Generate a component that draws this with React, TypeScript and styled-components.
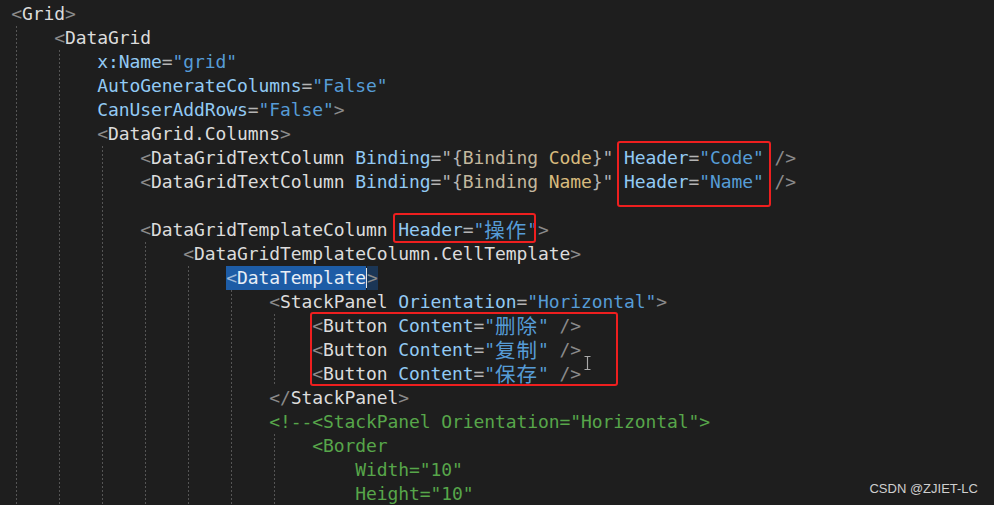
import React from 'react'
import styled, { createGlobalStyle, css } from 'styled-components'

const COL = 10.75
const LINE = 24
const LEFT = 11.3
const TOP = 2

type Kind = 'p' | 't' | 'a' | 'e' | 'v' | 'x' | 'y' | 'c' | 'w' | 'sp' | 'st' | 'sq' | 'caret'
type Tok = [Kind, string]

const colors: Record<Kind, string> = {
  p: '#8a8a8a',
  t: '#dcdcdc',
  a: '#92caf4',
  e: '#b4b4b4',
  v: '#569cd6',
  x: '#c4b89e',
  y: '#d7ba7d',
  c: '#57a64a',
  w: '#569cd6',
  sp: '#9cb8d8',
  st: '#e8eef6',
  sq: '#8a8a8a',
  caret: '#e0e0e0',
}

const Global = createGlobalStyle`
  html, body {
    margin: 0;
    padding: 0;
    background: #1e1e1e;
  }
`

const Editor = styled.div`
  position: relative;
  width: 994px;
  height: 505px;
  overflow: hidden;
  background: #1e1e1e;
`

const Code = styled.div`
  display: flex;
  flex-direction: column;
  padding: ${TOP}px 0 0 ${LEFT}px;
  font-family: "DejaVu Sans Mono", "Liberation Mono", monospace;
  font-size: 18px;
  letter-spacing: -0.09px;
`

const Line = styled.div<{ $indent: number }>`
  height: ${LINE}px;
  line-height: ${LINE}px;
  white-space: pre;
  padding-left: ${p => p.$indent * COL}px;
`

const Span = styled.span<{ $k: Kind }>`
  color: ${p => colors[p.$k]};
  ${p =>
    p.$k === 'w' &&
    css`
      display: inline-block;
      vertical-align: top;
      height: ${LINE}px;
      line-height: 22px;
      font-family: "Noto Sans CJK SC", sans-serif;
      font-size: 20.5px;
      letter-spacing: 1px;
    `}
  ${p =>
    (p.$k === 'sp' || p.$k === 'st') &&
    css`
      display: inline-block;
      height: ${LINE}px;
      background: #1d5ca6;
    `}
  ${p =>
    p.$k === 'sq' &&
    css`
      display: inline-block;
      height: ${LINE}px;
      background: #1b3656;
    `}
`

const Caret = styled.span`
  display: inline-block;
  width: 0;
  height: 20px;
  margin-top: 2px;
  vertical-align: top;
  border-left: 1.5px solid #e6e6e6;
`

const Guide = styled.div<{ $col: number; $from: number; $to: number }>`
  position: absolute;
  left: ${p => LEFT + p.$col * COL + 5}px;
  top: ${p => TOP + p.$from * LINE}px;
  height: ${p => (p.$to - p.$from) * LINE}px;
  width: 1px;
  background: repeating-linear-gradient(to bottom, #555 0 2px, transparent 2px 4px);
`

const RedBox = styled.div<{ $x: number; $y: number; $w: number; $h: number }>`
  position: absolute;
  left: ${p => p.$x}px;
  top: ${p => p.$y}px;
  width: ${p => p.$w}px;
  height: ${p => p.$h}px;
  box-sizing: border-box;
  border: 2px solid #ee1f1f;
  border-radius: 3px;
`

const Pointer = styled.svg`
  position: absolute;
  left: 583px;
  top: 355px;
`

const Watermark = styled.div`
  position: absolute;
  right: 16px;
  top: 481px;
  font-family: "Liberation Sans", Arial, sans-serif;
  font-size: 13px;
  color: #cfcfcf;
`

const lines: { indent: number; toks: Tok[] }[] = [
  { indent: 0, toks: [['p', '<'], ['t', 'Grid'], ['p', '>']] },
  { indent: 4, toks: [['p', '<'], ['t', 'DataGrid']] },
  { indent: 8, toks: [['a', 'x:Name'], ['e', '='], ['v', '"grid"']] },
  { indent: 8, toks: [['a', 'AutoGenerateColumns'], ['e', '='], ['v', '"False"']] },
  { indent: 8, toks: [['a', 'CanUserAddRows'], ['e', '='], ['v', '"False"'], ['p', '>']] },
  { indent: 8, toks: [['p', '<'], ['t', 'DataGrid.Columns'], ['p', '>']] },
  {
    indent: 12,
    toks: [
      ['p', '<'], ['t', 'DataGridTextColumn'], ['e', ' '], ['a', 'Binding'], ['e', '="{'],
      ['x', 'Binding'], ['e', ' '], ['y', 'Code'], ['e', '}"'], ['e', ' '],
      ['a', 'Header'], ['e', '='], ['v', '"Code"'], ['e', ' '], ['p', '/>'],
    ],
  },
  {
    indent: 12,
    toks: [
      ['p', '<'], ['t', 'DataGridTextColumn'], ['e', ' '], ['a', 'Binding'], ['e', '="{'],
      ['x', 'Binding'], ['e', ' '], ['y', 'Name'], ['e', '}"'], ['e', ' '],
      ['a', 'Header'], ['e', '='], ['v', '"Name"'], ['e', ' '], ['p', '/>'],
    ],
  },
  { indent: 0, toks: [] },
  {
    indent: 12,
    toks: [
      ['p', '<'], ['t', 'DataGridTemplateColumn'], ['e', ' '], ['a', 'Header'], ['e', '='],
      ['v', '"'], ['w', '操作'], ['v', '"'], ['p', '>'],
    ],
  },
  { indent: 16, toks: [['p', '<'], ['t', 'DataGridTemplateColumn.CellTemplate'], ['p', '>']] },
  { indent: 20, toks: [['sp', '<'], ['st', 'DataTemplate'], ['caret', ''], ['sq', '>']] },
  {
    indent: 24,
    toks: [['p', '<'], ['t', 'StackPanel'], ['e', ' '], ['a', 'Orientation'], ['e', '='], ['v', '"Horizontal"'], ['p', '>']],
  },
  ...['删除', '复制', '保存'].map(label => ({
    indent: 28,
    toks: [
      ['p', '<'], ['t', 'Button'], ['e', ' '], ['a', 'Content'], ['e', '='],
      ['v', '"'], ['w', label], ['v', '"'], ['e', ' '], ['p', '/>'],
    ] as Tok[],
  })),
  { indent: 24, toks: [['p', '</'], ['t', 'StackPanel'], ['p', '>']] },
  { indent: 24, toks: [['c', '<!--<StackPanel Orientation="Horizontal">']] },
  { indent: 28, toks: [['c', '<Border']] },
  { indent: 32, toks: [['c', 'Width="10"']] },
  { indent: 32, toks: [['c', 'Height="10"']] },
]

const guides = [
  { col: 0, from: 1, to: 22 },
  { col: 4, from: 2, to: 22 },
  { col: 8, from: 6, to: 22 },
  { col: 12, from: 10, to: 22 },
  { col: 16, from: 11, to: 22 },
  { col: 20, from: 12, to: 22 },
  { col: 24, from: 13, to: 16 },
  { col: 24, from: 18, to: 22 },
]

export default function App() {
  return (
    <>
      <Global />
      <Editor>
        {guides.map((g, i) => (
          <Guide key={i} $col={g.col} $from={g.from} $to={g.to} />
        ))}
        <Code>
          {lines.map((l, i) => (
            <Line key={i} $indent={l.indent}>
              {l.toks.map(([k, text], j) =>
                k === 'caret' ? <Caret key={j} /> : <Span key={j} $k={k}>{text}</Span>
              )}
              {l.toks.length === 0 ? ' ' : null}
            </Line>
          ))}
        </Code>
        <RedBox $x={617} $y={141} $w={154} $h={66} />
        <RedBox $x={393} $y={213} $w={143} $h={30} />
        <RedBox $x={310} $y={312} $w={308} $h={74} />
        <Pointer width="9" height="16" viewBox="0 0 9 16">
          <path d="M1.5 1.5h6M4.5 1.5v13M1.5 14.5h6" stroke="#1a1a1a" strokeWidth="3" fill="none" />
          <path d="M1.5 1.5h6M4.5 1.5v13M1.5 14.5h6" stroke="#a8a8a8" strokeWidth="1.2" fill="none" />
        </Pointer>
        <Watermark>CSDN @ZJIET-LC</Watermark>
      </Editor>
    </>
  )
}
